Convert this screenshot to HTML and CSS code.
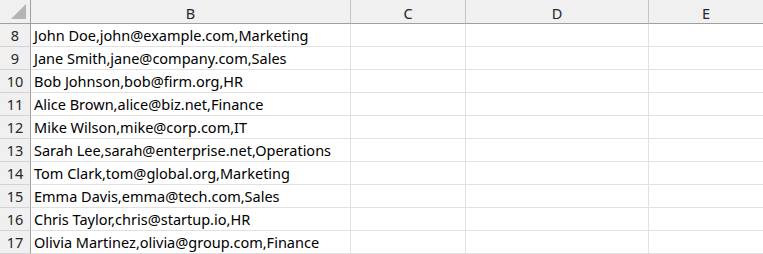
FILE: index.html
```html
<!DOCTYPE html>
<html>
<head>
<meta charset="utf-8">
<link rel="stylesheet" href="styles.css">
</head>
<body>
<div class="sheet">
  <div class="hdr corner"><svg class="tri" width="16" height="15" viewBox="0 0 16 15"><polygon points="0,15 15,15 15,0" fill="#b4b4b4"/></svg></div>
  <div class="hdr col">B</div>
  <div class="hdr col">C</div>
  <div class="hdr col">D</div>
  <div class="hdr col last">E</div>

  <div class="rh">8</div><div class="c">John Doe,john@example.com,Marketing</div><div class="c"></div><div class="c"></div><div class="c last"></div>
  <div class="rh">9</div><div class="c">Jane Smith,jane@company.com,Sales</div><div class="c"></div><div class="c"></div><div class="c last"></div>
  <div class="rh">10</div><div class="c">Bob Johnson,bob@firm.org,HR</div><div class="c"></div><div class="c"></div><div class="c last"></div>
  <div class="rh">11</div><div class="c">Alice Brown,alice@biz.net,Finance</div><div class="c"></div><div class="c"></div><div class="c last"></div>
  <div class="rh">12</div><div class="c">Mike Wilson,mike@corp.com,IT</div><div class="c"></div><div class="c"></div><div class="c last"></div>
  <div class="rh">13</div><div class="c">Sarah Lee,sarah@enterprise.net,Operations</div><div class="c"></div><div class="c"></div><div class="c last"></div>
  <div class="rh">14</div><div class="c">Tom Clark,tom@global.org,Marketing</div><div class="c"></div><div class="c"></div><div class="c last"></div>
  <div class="rh">15</div><div class="c">Emma Davis,emma@tech.com,Sales</div><div class="c"></div><div class="c"></div><div class="c last"></div>
  <div class="rh">16</div><div class="c">Chris Taylor,chris@startup.io,HR</div><div class="c"></div><div class="c"></div><div class="c last"></div>
  <div class="rh">17</div><div class="c">Olivia Martinez,olivia@group.com,Finance</div><div class="c"></div><div class="c"></div><div class="c last"></div>
</div>
</body>
</html>
```
FILE: styles.css
```css
html, body {
  margin: 0;
  padding: 0;
  background: #ffffff;
}
.sheet {
  display: grid;
  grid-template-columns: 31px 320px 115px 183px 114px;
  grid-template-rows: 24px repeat(10, 23px);
  width: 763px;
  height: 254px;
  overflow: hidden;
  font-family: "Noto Sans", "Liberation Sans", sans-serif;
  font-size: 14.5px;
  color: #000;
}
.hdr {
  background: #f0f0f0;
  border-bottom: 1px solid #9f9f9f;
  border-right: 1px solid #c4c4c4;
  box-sizing: border-box;
  display: flex;
  align-items: center;
  justify-content: center;
  color: #262626;
  padding-top: 2px;
}
.corner {
  border-right: 1px solid #9f9f9f;
  align-items: flex-end;
  justify-content: flex-end;
  padding: 0 3px 4px 0;
}
.tri { display: block; }
.hdr.last { border-right: none; }
.rh {
  background: #f0f0f0;
  border-right: 1px solid #9f9f9f;
  border-bottom: 1px solid #d4d4d4;
  box-sizing: border-box;
  display: flex;
  align-items: center;
  justify-content: center;
  color: #262626;
}
.c {
  border-right: 1px solid #e1e1e1;
  border-bottom: 1px solid #e1e1e1;
  box-sizing: border-box;
  display: flex;
  align-items: center;
  padding-left: 3px;
  white-space: nowrap;
  overflow: visible;
}
.c.last { border-right: none; }
```
